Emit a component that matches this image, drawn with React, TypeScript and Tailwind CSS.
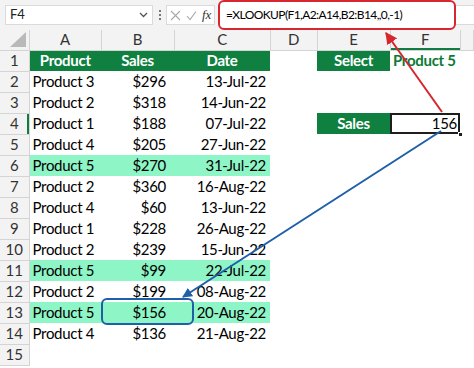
import React from "react";

type Row = { product: string; sales: string; date: string; hl?: boolean };

const data: Row[] = [
  { product: "Product 3", sales: "$296", date: "13-Jul-22" },
  { product: "Product 2", sales: "$318", date: "14-Jun-22" },
  { product: "Product 1", sales: "$188", date: "07-Jul-22" },
  { product: "Product 4", sales: "$205", date: "27-Jun-22" },
  { product: "Product 5", sales: "$270", date: "31-Jul-22", hl: true },
  { product: "Product 2", sales: "$360", date: "16-Aug-22" },
  { product: "Product 4", sales: "$60", date: "13-Jun-22" },
  { product: "Product 1", sales: "$228", date: "26-Aug-22" },
  { product: "Product 2", sales: "$239", date: "15-Jun-22" },
  { product: "Product 5", sales: "$99", date: "22-Jul-22", hl: true },
  { product: "Product 2", sales: "$199", date: "08-Aug-22" },
  { product: "Product 5", sales: "$156", date: "20-Aug-22", hl: true },
  { product: "Product 4", sales: "$136", date: "21-Aug-22" },
  { product: "", sales: "", date: "" },
];

const cols = ["A", "B", "C", "D", "E", "F", ""];
const head = "border-b border-r border-[#d4d4d4] bg-[#f3f3f3] p-0 text-center font-normal text-[#333]";
const green = "bg-[#108040] p-0 text-center font-bold text-white";

const FormulaBar = () => (
  <div className="flex h-[30px] items-center bg-[#f3f3f3]">
    <div className="ml-[5px] flex h-[20px] w-[148px] items-center justify-between border border-[#dadada] bg-white px-[4px] text-[13px] text-[#222]">
      <span>F4</span>
      <svg width="9" height="6" viewBox="0 0 9 6">
        <path d="M1 1l3.5 3.5L8 1" fill="none" stroke="#555" strokeWidth="1.3" />
      </svg>
    </div>
    <div className="ml-[6px] flex flex-col gap-[2px]">
      <span className="h-[2px] w-[2px] bg-[#777]" />
      <span className="h-[2px] w-[2px] bg-[#777]" />
      <span className="h-[2px] w-[2px] bg-[#777]" />
    </div>
    <div className="ml-[5px] flex h-[20px] w-[49px] items-center gap-[5px] border border-[#dadada] bg-white pl-[3px]">
      <svg width="11" height="11" viewBox="0 0 11 11">
        <path d="M1 1l9 9M10 1l-9 9" stroke="#a8a8a8" strokeWidth="1.1" />
      </svg>
      <svg width="11" height="11" viewBox="0 0 11 11">
        <path d="M1 6l3 3.5L10 1.5" fill="none" stroke="#a8a8a8" strokeWidth="1.1" />
      </svg>
      <span className="font-['Liberation_Serif',serif] text-[13px] italic text-[#333]">fx</span>
    </div>
    <div className="ml-[3px] flex h-[30px] w-[238px] items-center rounded-[6px] border-2 border-[#d7262d] bg-white pl-[6px] text-[12px] tracking-[-0.6px] text-black">
      =XLOOKUP(F1,A2:A14,B2:B14,,0,-1)
    </div>
    <div className="h-[20px] flex-1 border-y border-[#dadada] bg-white" />
  </div>
);

export default function App() {
  return (
    <div className="relative h-[368px] w-[474px] overflow-hidden bg-white font-['Lato',sans-serif]">
      <FormulaBar />
      <table className="w-[474px] table-fixed border-collapse text-[15px] leading-none tracking-[-0.3px]">
        <colgroup>
          <col className="w-[29px]" />
          <col className="w-[72px]" />
          <col className="w-[73px]" />
          <col className="w-[96px]" />
          <col className="w-[47px]" />
          <col className="w-[73px]" />
          <col className="w-[70px]" />
          <col />
        </colgroup>
        <thead>
          <tr className="h-[20px]">
            <th className={`${head} relative`}>
              <svg className="absolute bottom-[3px] right-[3px]" width="16" height="15" viewBox="0 0 16 15">
                <path d="M16 0V15H0Z" fill="#b9b9b9" />
              </svg>
            </th>
            {cols.map((c, i) => (
              <th
                key={i}
                className={c === "F" ? `${head} bg-[#d2d2d2] shadow-[inset_0_-2px_0_#107c41]` : head}
              >
                {c}
              </th>
            ))}
          </tr>
        </thead>
        <tbody>
          <tr className="h-[21px]">
            <td className={`${head} tracking-normal`}>1</td>
            <td className={green}>Product</td>
            <td className={green}>Sales</td>
            <td className={green}>Date</td>
            <td />
            <td className={green}>Select</td>
            <td className="overflow-visible whitespace-nowrap p-0 pl-[3px] font-bold text-[#0b7a35]">Product 5</td>
            <td />
          </tr>
          {data.map((r, i) => {
            const n = i + 2;
            const bg = r.hl ? "bg-[#8ef5c6]" : "bg-white";
            return (
              <tr key={n} className="h-[21px]">
                <td
                  className={
                    n === 4
                      ? `${head} bg-[#d2d2d2] tracking-normal shadow-[inset_-2px_0_0_#107c41]`
                      : `${head} tracking-normal`
                  }
                >
                  {n}
                </td>
                <td className={`p-0 pl-[3px] text-black ${bg}`}>{r.product}</td>
                <td className={`p-0 pr-[8px] text-right text-black ${bg}`}>{r.sales}</td>
                <td className={`p-0 pr-[4px] text-right text-black ${bg}`}>{r.date}</td>
                <td />
                {n === 4 ? (
                  <>
                    <td className={green}>Sales</td>
                    <td className="relative p-0 pr-[3px] text-right text-black shadow-[inset_0_0_0_2px_#1e1e1e]">
                      156
                      <span className="absolute -bottom-[3px] -right-[3px] h-[5px] w-[5px] border border-white bg-[#1e1e1e]" />
                    </td>
                  </>
                ) : (
                  <>
                    <td />
                    <td />
                  </>
                )}
                <td />
              </tr>
            );
          })}
        </tbody>
      </table>

      {/* annotation arrows drawn over the sheet */}
      <svg className="pointer-events-none absolute left-0 top-0" width="474" height="368" viewBox="0 0 474 368">
        <defs>
          <marker id="redHead" viewBox="0 0 10 10" refX="9" refY="5" markerWidth="6" markerHeight="6" orient="auto">
            <path d="M0 0L10 5L0 10Z" fill="#d7262d" />
          </marker>
          <marker id="blueHead" viewBox="0 0 10 10" refX="9" refY="5" markerWidth="5" markerHeight="5" orient="auto">
            <path d="M0 0L10 5L0 10Z" fill="#1f5fa8" />
          </marker>
        </defs>
        <line x1="442" y1="112" x2="386" y2="33" stroke="#d7262d" strokeWidth="2" markerEnd="url(#redHead)" />
        <line x1="441" y1="131" x2="183" y2="297" stroke="#1f5fa8" strokeWidth="2" markerEnd="url(#blueHead)" />
        <rect x="102" y="299" width="91" height="25" rx="5" fill="none" stroke="#1f5fa8" strokeWidth="2" />
      </svg>
    </div>
  );
}
